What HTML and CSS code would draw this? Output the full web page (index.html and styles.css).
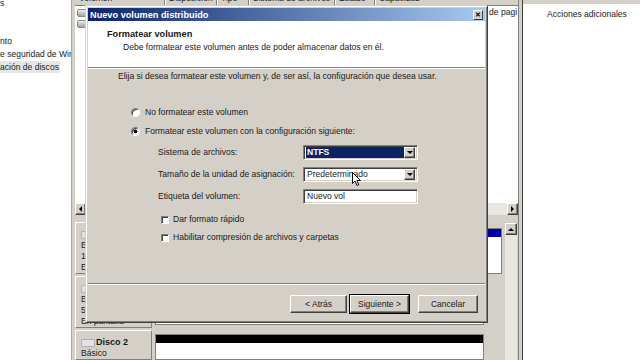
FILE: index.html
```html
<!DOCTYPE html>
<html lang="es">
<head>
    <meta charset="UTF-8">
    <meta name="viewport" content="width=device-width, initial-scale=1.0">
    <title>Administración de discos - Nuevo volumen distribuido</title>
    <link rel="stylesheet" href="styles.css">
</head>
<body>
    <div class="window">
        <aside class="tree">
            <div class="tree-items">
                <div class="tree-item">s</div>
                <div class="tree-item"></div>
                <div class="tree-item"></div>
                <div class="tree-item">nto</div>
                <div class="tree-item">e seguridad de Windows Server</div>
                <div class="tree-item"><span class="tree-sel">ación de discos</span></div>
            </div>
        </aside>
        <div class="splitter"></div>

        <main class="center">
            <div class="list">
                <div class="list-head">
                    <span class="col col-vol">Volumen</span>
                    <span class="col col-disp">Disposición</span>
                    <span class="col col-tipo">Tipo</span>
                    <span class="col col-fs">Sistema de archivos</span>
                    <span class="col col-estado">Estado</span>
                    <span class="col col-rest">Capacidad</span>
                </div>
                <div class="list-rows">
                    <div class="list-row">
                        <span class="vol-icon"></span>
                        <span class="row-status">de paginación</span>
                    </div>
                    <div class="list-row">
                        <span class="vol-icon"></span>
                        <span class="row-status"></span>
                    </div>
                </div>
            </div>

            <div class="hscroll">
                <span class="sb-btn arrow-left"></span>
                <span class="sb-track"></span>
                <span class="sb-btn arrow-right"></span>
            </div>

            <div class="graph">
                <div class="disks">
                    <div class="disk disk-1">
                        <div class="disk-label">
                            <div class="disk-name"><span class="disk-icon"></span>Disco 0</div>
                            <div>Básico</div>
                            <div>10,00 GB</div>
                            <div>En pantalla</div>
                        </div>
                        <div class="part part-wide">
                            <div class="part-head"></div>
                            <div class="part-body">(C:)</div>
                        </div>
                    </div>
                    <div class="disk disk-2">
                        <div class="disk-label">
                            <div class="disk-name"><span class="disk-icon"></span>Disco 1</div>
                            <div>Básico</div>
                            <div>5,00 GB</div>
                            <div>En pantalla</div>
                        </div>
                        <div class="part part-free">
                            <div class="part-head"></div>
                            <div class="part-body">
                                <div>5,00 GB</div>
                                <div>No asignado</div>
                            </div>
                        </div>
                    </div>
                    <div class="disk disk-3">
                        <div class="disk-label">
                            <div class="disk-name"><span class="disk-icon"></span>Disco 2</div>
                            <div>Básico</div>
                        </div>
                        <div class="part part-free">
                            <div class="part-head"></div>
                            <div class="part-body"></div>
                        </div>
                    </div>
                </div>
                <div class="vscroll">
                    <span class="sb-btn arrow-up"></span>
                    <span class="sb-track"></span>
                </div>
            </div>
        </main>

        <div class="splitter splitter-dark"></div>

        <aside class="actions">
            <div class="actions-item">Acciones adicionales</div>
        </aside>
    </div>

    <!-- wizard dialog floats over the console -->
    <div class="dialog">
        <div class="titlebar">
            <span>Nuevo volumen distribuido</span>
            <span class="close">✕</span>
        </div>

        <div class="wiz-header">
            <div class="wiz-title">Formatear volumen</div>
            <div class="wiz-sub">Debe formatear este volumen antes de poder almacenar datos en él.</div>
        </div>

        <div class="wiz-body">
            <p class="intro">Elija si desea formatear este volumen y, de ser así, la configuración que desea usar.</p>

            <div class="option"><span class="radio"></span>No formatear este volumen</div>
            <div class="option"><span class="radio checked"></span>Formatear este volumen con la configuración siguiente:</div>

            <div class="fmt-grid">
                <span class="fmt-label">Sistema de archivos:</span>
                <div class="combo">
                    <span class="combo-value selected">NTFS</span>
                    <span class="combo-btn"></span>
                </div>

                <span class="fmt-label">Tamaño de la unidad de asignación:</span>
                <div class="combo">
                    <span class="combo-value">Predeterminado</span>
                    <span class="combo-btn"></span>
                </div>

                <span class="fmt-label">Etiqueta del volumen:</span>
                <div class="field">Nuevo vol</div>
            </div>

            <div class="check"><span class="box"></span>Dar formato rápido</div>
            <div class="check"><span class="box"></span>Habilitar compresión de archivos y carpetas</div>
        </div>

        <div class="wiz-footer">
            <button type="button" class="btn">&lt; Atrás</button>
            <button type="button" class="btn btn-default">Siguiente &gt;</button>
            <button type="button" class="btn btn-cancel">Cancelar</button>
        </div>
    </div>

    <svg class="cursor" width="10" height="15" viewBox="0 0 10 15">
        <path d="M0.5 0.5 L0.5 11.5 L3 9 L5 13.5 L6.8 12.7 L4.9 8.5 L8.5 8.5 Z" fill="#fff" stroke="#000" stroke-width="1"/>
    </svg>
</body>
</html>
```

FILE: styles.css
```css
:root {
    --face: #d4d0c8;
    --shadow: #808080;
    --dark: #404040;
    --navy: #0a246a;
    --text: #1a1a1a;
}

body {
    margin: 0;
    width: 640px;
    height: 360px;
    overflow: hidden;
    position: relative;
    font-family: "Liberation Sans", Arial, sans-serif;
    font-size: 8.55px;
    color: var(--text);
    background: #fff;
}

.window {
    display: flex;
    height: 360px;
}

/* left tree */
.tree {
    width: 71px;
    background: #fff;
    overflow: hidden;
    white-space: nowrap;
}

.tree-items {
    margin-top: -3px;
}

.tree-item {
    height: 12.8px;
    line-height: 12.8px;
    overflow: hidden;
}

.tree-sel {
    background: #e6e6e6;
    padding: 1px 1px 1px 0;
}

.splitter {
    width: 4px;
    box-sizing: border-box;
    background: var(--face);
    border-left: 1px solid #a8a8a8;
}

.splitter-dark {
    width: 5px;
    border-left: 1px solid var(--shadow);
    border-right: 1px solid var(--dark);
}

/* center pane */
.center {
    width: 443px;
    display: flex;
    flex-direction: column;
    background: var(--face);
}

.list {
    height: 203px;
    background: #fff;
    overflow: hidden;
}

.list-head {
    height: 13px;
    margin-top: -8px;
    display: flex;
    background: var(--face);
    border-bottom: 1px solid var(--shadow);
}

.col {
    box-sizing: border-box;
    padding-left: 4px;
    line-height: 13px;
    overflow: hidden;
    white-space: nowrap;
    border-right: 1px solid var(--shadow);
    box-shadow: 1px 0 #fff;
}

.col-vol { width: 90px; }
.col-disp { width: 52px; }
.col-tipo { width: 32px; }
.col-fs { width: 86px; }
.col-estado { width: 40px; }
.col-rest { flex: 1; border-right: none; }

.list-rows {
    padding-top: 1px;
}

.list-row {
    display: grid;
    grid-template-columns: 414px 28px;
    height: 11px;
    line-height: 11px;
    white-space: nowrap;
    overflow: hidden;
}

.row-status {
    overflow: hidden;
}

.vol-icon {
    width: 8px;
    height: 6px;
    margin: 2px 0 0 2px;
    border: 1px solid #8a8a8a;
    border-radius: 2px;
    background: linear-gradient(#f0f0f0, #a0a0a0);
}

/* scrollbars */
.hscroll {
    height: 12px;
    display: flex;
    background: #e9e7e2;
}

.sb-track {
    flex: 1;
}

.sb-btn {
    width: 11px;
    height: 12px;
    box-sizing: border-box;
    background: var(--face);
    border: 1px solid;
    border-color: #fff var(--dark) var(--dark) #fff;
    box-shadow: inset -1px -1px var(--shadow);
    display: flex;
    align-items: center;
    justify-content: center;
}

.sb-btn::before {
    content: "";
    border: 3px solid transparent;
}

.arrow-left::before {
    border-right-color: #000;
    border-left-width: 0;
}

.arrow-right::before {
    border-left-color: #000;
    border-right-width: 0;
}

.arrow-up::before {
    border-bottom-color: #000;
    border-top-width: 0;
}

/* graphical disk view */
.graph {
    flex: 1;
    display: flex;
    padding-top: 7px;
    background: var(--face);
    min-height: 0;
}

.disks {
    width: 430px;
    display: flex;
    flex-direction: column;
    gap: 2px;
    overflow: hidden;
}

.disk {
    display: flex;
    gap: 3px;
}

.disk-1 { height: 55px; }
.disk-2 { height: 57px; }
.disk-3 { flex: 1; }

.disk-label {
    width: 77px;
    flex-shrink: 0;
    box-sizing: border-box;
    padding: 6px 0 0 5px;
    border: 1px solid;
    border-color: #fff var(--shadow) var(--shadow) #fff;
    line-height: 11px;
    white-space: nowrap;
    overflow: hidden;
}

.disk-name {
    display: flex;
    align-items: center;
    gap: 1px;
    font-weight: bold;
    font-size: 9px;
}

.disk-icon {
    width: 12px;
    height: 6px;
    border: 1px solid #b0b0b0;
    border-radius: 1px;
    background: #e2e2e2;
}

.part {
    width: 327px;
    margin-top: 6px;
    display: flex;
    flex-direction: column;
    border: 1px solid var(--shadow);
    background: #fff;
}

.part-wide {
    width: 345px;
}

.disk-2 .part {
    margin-bottom: 3px;
}

.disk-3 .part {
    margin-top: 4px;
}

.part-head {
    height: 8px;
    background: #0000a8;
}

.part-free .part-head {
    background: #000;
}

.part-body {
    flex: 1;
    display: flex;
    flex-direction: column;
    justify-content: flex-end;
    padding: 0 0 2px 2px;
    line-height: 11px;
}

.vscroll {
    width: 12px;
    margin: 1px 1px 0 0;
    display: flex;
    flex-direction: column;
    background: #e9e7e2;
}

.vscroll .sb-btn {
    width: 12px;
}

/* actions pane */
.actions {
    flex: 1;
    background: #fff;
    border-top: 4px solid var(--face);
}

.actions-item {
    padding: 5px 0 0 24px;
    line-height: 11px;
}

/* wizard dialog */
.dialog {
    position: absolute;
    left: 85px;
    top: 5px;
    width: 403px;
    height: 318px;
    box-sizing: border-box;
    padding: 2px;
    display: flex;
    flex-direction: column;
    background: var(--face);
    border: 1px solid;
    border-color: var(--face) var(--dark) var(--dark) var(--face);
    box-shadow: inset 1px 1px #fff, inset -1px -1px var(--shadow);
}

.titlebar {
    height: 13px;
    flex-shrink: 0;
    display: flex;
    align-items: center;
    justify-content: space-between;
    padding: 0 2px;
    background: linear-gradient(to right, var(--navy), #a6caf0);
    color: #fff;
    font-weight: bold;
    font-size: 9.2px;
}

.close {
    width: 10px;
    height: 10px;
    box-sizing: border-box;
    display: flex;
    align-items: center;
    justify-content: center;
    background: var(--face);
    border: 1px solid;
    border-color: #fff var(--dark) var(--dark) #fff;
    color: #000;
    font-size: 7px;
    font-weight: bold;
}

.wiz-header {
    height: 47px;
    flex-shrink: 0;
    box-sizing: border-box;
    padding: 8px 0 0 19px;
    background: #fff;
    border-bottom: 1px solid var(--shadow);
    line-height: 11px;
}

.wiz-title {
    font-weight: bold;
    font-size: 9.2px;
}

.wiz-sub {
    margin-top: 2px;
    padding-left: 16px;
}

.wiz-body {
    flex: 1;
    padding: 2px 0 0 30px;
    border-top: 1px solid #fff;
    line-height: 11px;
}

.intro {
    margin: 0 0 25px;
}

.option {
    display: flex;
    align-items: center;
    gap: 5px;
    margin: 0 0 8px 13px;
    height: 11px;
}

.radio {
    width: 9px;
    height: 9px;
    box-sizing: border-box;
    border-radius: 50%;
    border: 1px solid;
    border-color: var(--shadow) #fff #fff var(--shadow);
    background: #fff;
    box-shadow: inset 1px 1px var(--dark);
}

.radio.checked {
    background: radial-gradient(circle, #000 1.6px, #fff 2.2px);
}

.fmt-grid {
    display: grid;
    grid-template-columns: 145px 115px;
    grid-auto-rows: 15px;
    row-gap: 7px;
    align-items: center;
    margin: 0 0 10px 40px;
}

.combo,
.field {
    height: 15px;
    box-sizing: border-box;
    display: flex;
    align-items: center;
    padding: 2px;
    background: #fff;
    border: 1px solid;
    border-color: var(--shadow) #fff #fff var(--shadow);
    box-shadow: inset 1px 1px var(--dark), inset -1px -1px var(--face);
}

.field {
    padding-left: 3px;
}

.combo-value {
    flex: 1;
    height: 11px;
    padding-left: 1px;
    white-space: nowrap;
    overflow: hidden;
}

.combo-value.selected {
    background: var(--navy);
    color: #fff;
    font-weight: bold;
}

.combo-btn {
    width: 11px;
    height: 11px;
    box-sizing: border-box;
    display: flex;
    align-items: center;
    justify-content: center;
    background: var(--face);
    border: 1px solid;
    border-color: #fff var(--dark) var(--dark) #fff;
    box-shadow: inset -1px -1px var(--shadow);
}

.combo-btn::before {
    content: "";
    border: 3px solid transparent;
    border-top-color: #000;
    border-bottom-width: 0;
}

.check {
    display: flex;
    align-items: center;
    gap: 4px;
    height: 11px;
    margin: 0 0 7px 43px;
}

.box {
    width: 8px;
    height: 8px;
    box-sizing: border-box;
    border: 1px solid;
    border-color: var(--shadow) #fff #fff var(--shadow);
    background: #fff;
    box-shadow: inset 1px 1px var(--dark);
}

.wiz-footer {
    height: 37px;
    flex-shrink: 0;
    box-sizing: border-box;
    display: flex;
    justify-content: flex-end;
    align-items: flex-start;
    padding: 11px 7px 0 0;
    border-top: 1px solid var(--shadow);
    box-shadow: inset 0 1px #fff;
}

.btn {
    width: 57px;
    height: 18px;
    padding: 0;
    font-family: inherit;
    font-size: 8.55px;
    color: var(--text);
    background: var(--face);
    border: 1px solid;
    border-color: #fff var(--dark) var(--dark) #fff;
    box-shadow: inset -1px -1px var(--shadow);
}

.btn-default {
    width: 59px;
    margin-left: 3px;
    outline: 1px solid #000;
}

.btn-cancel {
    width: 60px;
    margin-left: 9px;
}

.cursor {
    position: absolute;
    left: 352px;
    top: 172px;
}
```
